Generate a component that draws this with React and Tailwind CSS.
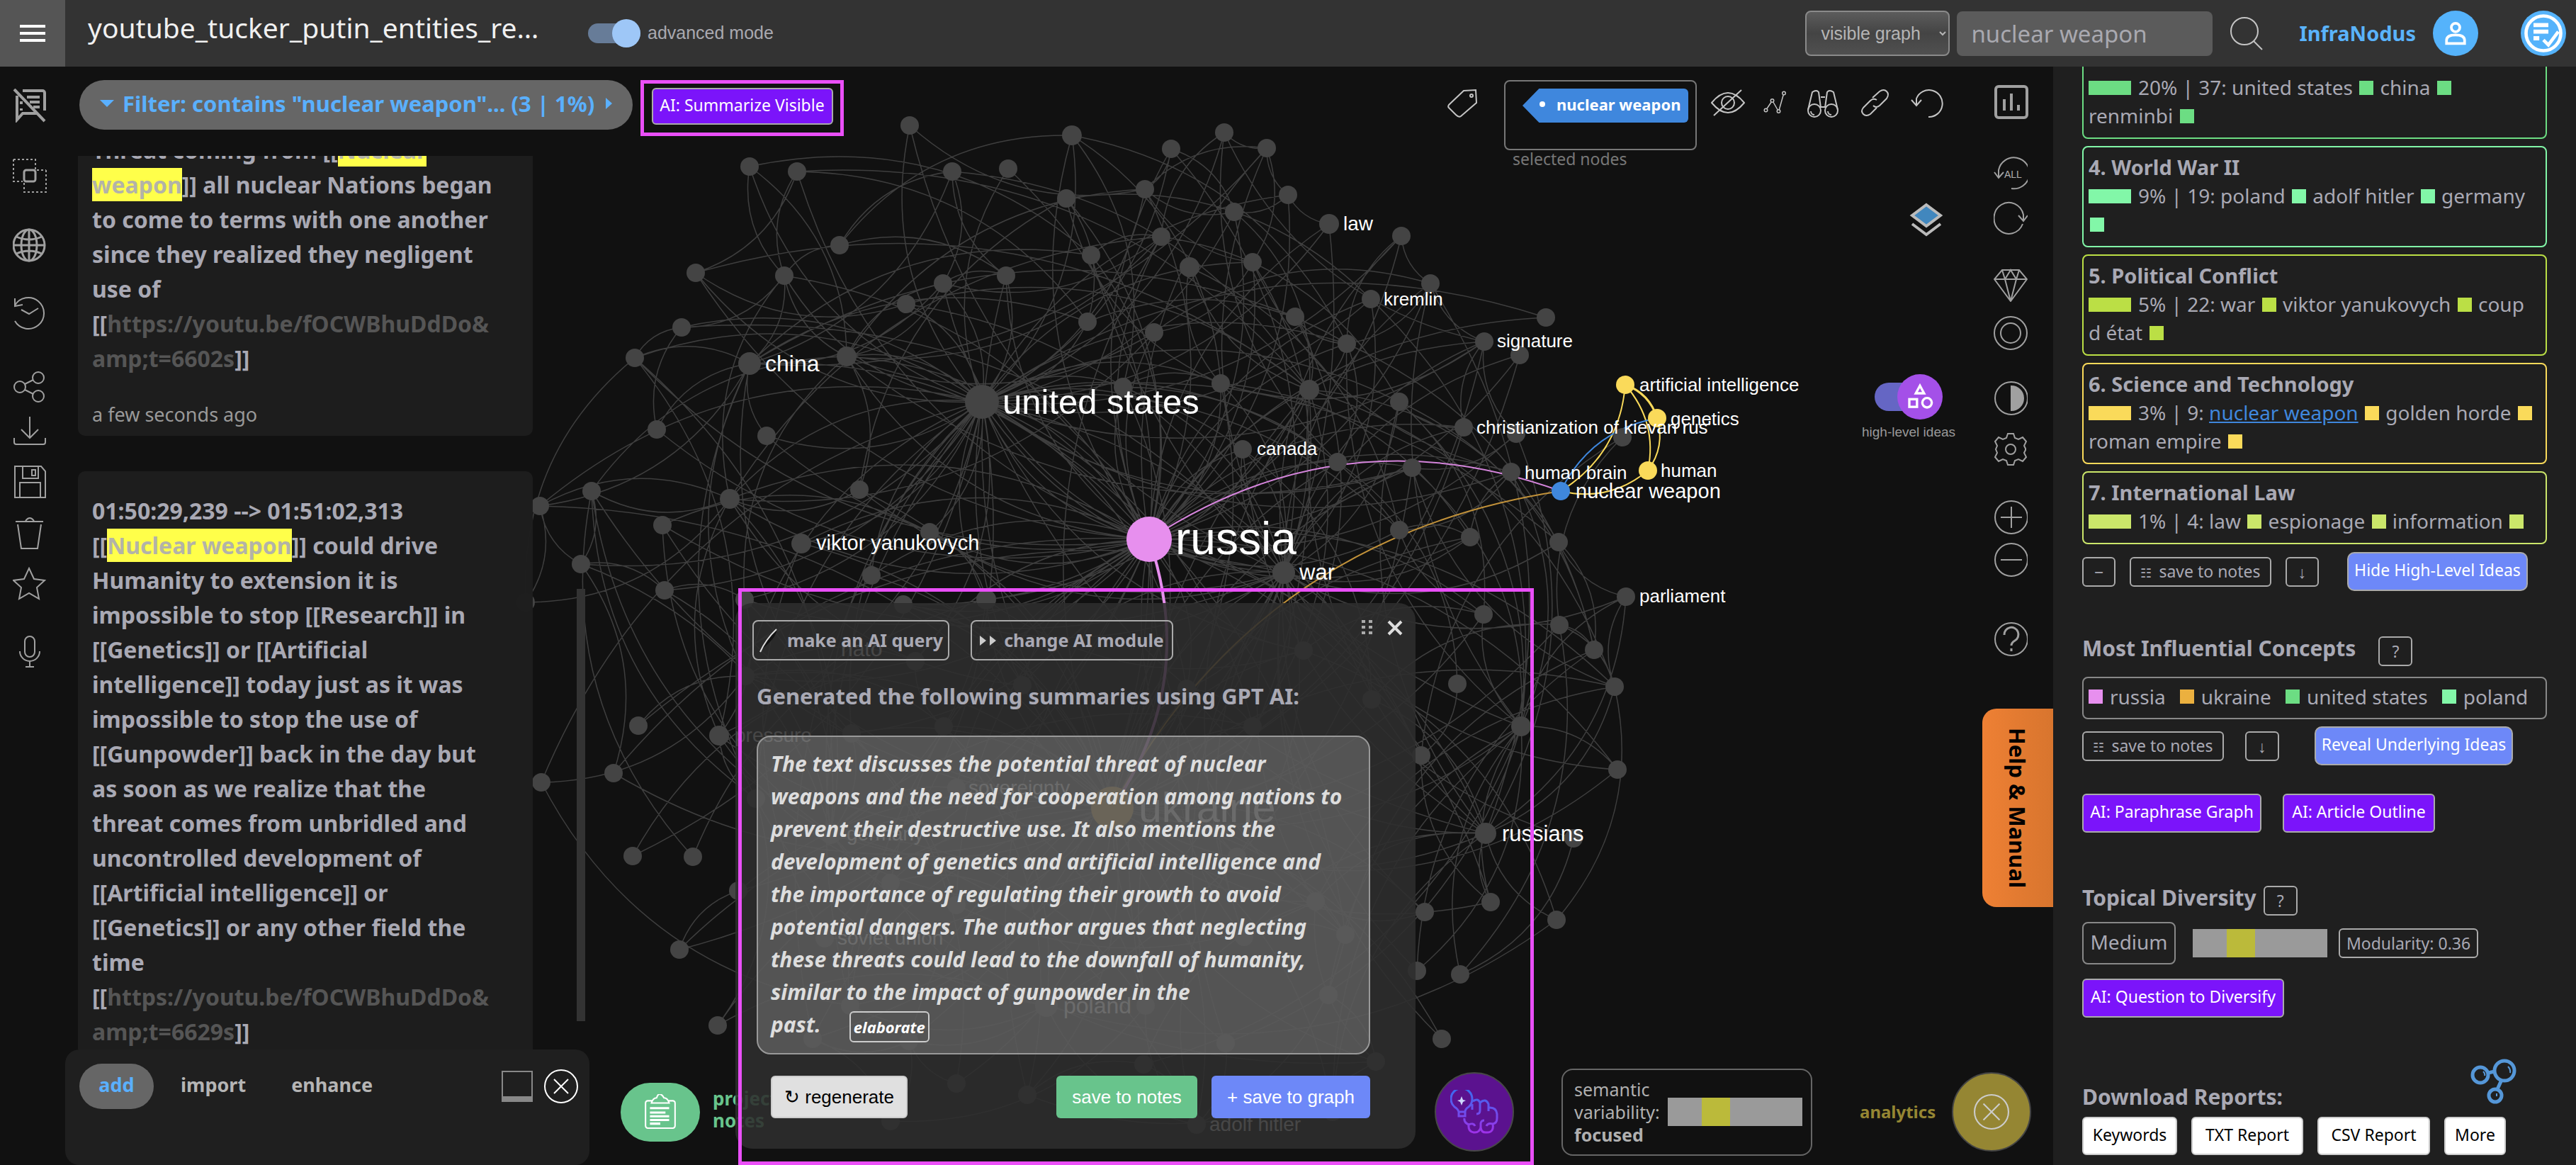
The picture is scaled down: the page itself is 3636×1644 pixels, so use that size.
import { useState } from 'react'

// [x, y, radius?]
const NODES = [
  [1386, 567, 24], [1622, 761, 32], [1570, 1140, 30], [1812, 808, 16], [1058, 513, 16], [2097, 1176, 15],
  [1477, 1419, 16], [1173, 1176, 15], [1195, 503, 14], [1848, 550, 14], [1015, 1038, 14], [1030, 704, 14], [2147, 1025, 14],
  [1284, 177], [1513, 191, 14], [1728, 187], [1653, 210], [1788, 209], [1058, 235], [1125, 242], [1344, 242],
  [1423, 238], [1616, 267], [1505, 280], [1742, 299], [1639, 334], [1540, 360], [1185, 346], [982, 385],
  [1107, 389], [1679, 377, 14], [1768, 370], [1420, 389], [1331, 400], [1279, 429], [1535, 454], [1629, 469],
  [962, 462], [896, 505], [1585, 546], [1723, 541], [927, 606], [1082, 615], [1754, 634], [835, 693],
  [762, 714], [1213, 691], [935, 741], [1312, 751], [1131, 767, 14], [820, 796], [1230, 812], [938, 833],
  [1051, 846], [1275, 853], [1392, 846, 14], [1818, 275], [1876, 316, 14], [1978, 333], [2019, 400],
  [1935, 422], [1828, 447], [1901, 485], [2182, 448], [2095, 482], [2145, 501], [1975, 567], [2066, 603],
  [2140, 612], [2290, 617], [1888, 652], [1993, 660], [2133, 666], [1975, 748], [2075, 758], [2200, 765],
  [2295, 842], [2094, 867], [2201, 882], [2250, 917], [2057, 965], [2279, 969], [2006, 1066], [2283, 1086],
  [2221, 1183], [1292, 933], [1443, 967], [1332, 1025], [1202, 1035], [1840, 918], [1675, 972], [1936, 987],
  [1768, 1025], [1350, 1112], [1746, 1209], [1257, 1246], [1350, 1277], [1439, 1272], [1857, 1272],
  [1899, 1319], [1756, 1322], [1164, 1324], [1875, 1404], [1617, 1419], [1200, 1419], [1147, 1466],
  [1730, 1472], [1283, 1469], [1614, 1502], [1942, 1498], [1350, 1529], [1450, 1545], [1257, 1582],
  [1689, 1587], [1881, 1569], [1052, 954], [1067, 1127], [2011, 1287], [2104, 1273], [2000, 1370],
  [2061, 1375], [2035, 1466], [2197, 1298], [764, 1104], [901, 1024], [866, 1091], [893, 1208],
  [978, 1209], [959, 1340], [1042, 1257], [1013, 1447], [742, 850],
]

const COLORED = [
  [2294, 543, '#fada5a'], [2339, 590, '#fada5a'], [2326, 664, '#fada5a'], [2203, 693, '#3f87dd'],
]

// text, x, y, size
const LABELS = [
  ['united states', 1415, 584, 49], ['russia', 1659, 782, 64], ['china', 1080, 524, 32],
  ['viktor yanukovych', 1152, 776, 29], ['canada', 1774, 642, 26], ['law', 1896, 325, 28],
  ['kremlin', 1953, 431, 26], ['signature', 2113, 490, 26], ['artificial intelligence', 2314, 552, 26],
  ['genetics', 2358, 600, 26], ["christianization of kievan rus'", 2084, 612, 26], ['human brain', 2152, 676, 26],
  ['human', 2344, 673, 26], ['nuclear weapon', 2224, 703, 29], ['war', 1834, 818, 31],
  ['parliament', 2314, 850, 26], ['russians', 2120, 1187, 31], ['ukraine', 1607, 1160, 59],
  ['nato', 1187, 926, 30], ['pressure', 1037, 1047, 28], ['sovereignty', 1367, 1121, 28],
  ['germany', 1195, 1186, 28], ['soviet union', 1182, 1333, 28], ['poland', 1501, 1430, 32],
  ['adolf hitler', 1707, 1596, 28],
]

// source x, y, target x, y, color, width
const LINKS = [
  [1622, 761, 2203, 693, '#d585dc', 2], [1570, 1140, 2203, 693, '#c2923a', 2], [2294, 543, 2203, 693, '#fada5a', 2],
  [2326, 664, 2203, 693, '#fada5a', 2], [2294, 543, 2339, 590, '#fada5a', 3], [2294, 543, 2326, 664, '#fada5a', 2],
  [2339, 590, 2326, 664, '#fada5a', 2], [2203, 693, 2339, 590, '#3f87dd', 2], [1622, 761, 1570, 1140, '#e78fee', 4],
]

function curve(x1, y1, x2, y2) {
  const cx = Math.round((x1 + x2) / 2 + (y2 - y1) / 4)
  const cy = Math.round((y1 + y2) / 2 + (x1 - x2) / 4)
  return `M${x1} ${y1}Q${cx} ${cy} ${x2} ${y2}`
}

function buildEdges() {
  let seed = 7
  const rnd = () => {
    seed = (seed * 16807) % 2147483647
    return seed / 2147483647
  }
  const out = []
  const join = (a, b) => {
    const [p, q] = rnd() > 0.5 ? [a, b] : [b, a]
    out.push(curve(p[0], p[1], q[0], q[1]))
  }
  const hubs = [0.7, 0.75, 0.65, 0.35, 0.15, 0.22, 0.2, 0.2, 0.18, 0.18, 0.12, 0.14, 0.18]
  NODES.forEach((n, i) => {
    hubs.forEach((chance, h) => {
      const d = Math.hypot(n[0] - NODES[h][0], n[1] - NODES[h][1])
      if (h !== i && d < 950 && rnd() < chance * (d > 650 ? 0.35 : 1)) join(n, NODES[h])
    })
    NODES.slice(i + 1).forEach(m => {
      const d = Math.hypot(n[0] - m[0], n[1] - m[1])
      if (d < 190 ? rnd() < 0.18 : d < 560 && rnd() < 0.03) join(n, m)
    })
  })
  return out.join('')
}

const EDGES = buildEdges()

function Graph() {
  return (
    <svg className="absolute left-0 -top-[94px] w-full h-[calc(100%+94px)]" aria-label="Knowledge graph">
      <path d={EDGES} fill="none" stroke="#474747" strokeWidth="1.5" strokeOpacity="0.85"/>
      {LINKS.map(([a, b, c, d, color, w], i) => (
        <path key={i} d={curve(a, b, c, d)} fill="none" stroke={color} strokeWidth={w}/>
      ))}
      {NODES.map(([x, y, r = 13], i) => (
        <circle key={i} cx={x} cy={y} r={r} fill={i === 1 ? '#e78fee' : i === 2 ? '#ebb03f' : '#444'}/>
      ))}
      {COLORED.map(([x, y, c]) => <circle key={x} cx={x} cy={y} r="13" fill={c}/>)}
      <g fill="#fff" className="font-['Liberation_Sans',sans-serif]">
        {LABELS.map(([t, x, y, s]) => <text key={t} x={x} y={y} fontSize={s}>{t}</text>)}
      </g>
    </svg>
  )
}

function Icon({ children, size = 48, color = '#a0a0a0', w = 2 }) {
  return (
    <svg width={size} height={size} viewBox="0 0 48 48" fill="none" stroke={color} strokeWidth={w} className="shrink-0" aria-hidden="true">
      {children}
    </svg>
  )
}

const RAIL = [
  { label: 'Hide text', gap: 'mt-[31px]', w: 4, d: <><path d="M14 3H42a3 3 0 0 1 3 3V31M6 10V44l8-9H34M20 12H38M24 19H38M29 26H38M12 18v4M12 28v3"/><path d="M2 1L45 46" strokeWidth="4"/></> },
  { label: 'Select', gap: 'mt-[51px]', d: <><path d="M1 1H32V15M1 1V32H14M47 16V47H16V33" strokeDasharray="3 3"/><path d="M34 16H47" strokeDasharray="3 3"/><rect x="16" y="16" width="16" height="16" rx="3" strokeWidth="3"/></> },
  { label: 'Web', gap: 'mt-[50px]', w: 3, d: <><circle cx="23" cy="24" r="22"/><ellipse cx="23" cy="24" rx="11" ry="22"/><path d="M23 2V46M1 24H45M5 12Q23 20 41 12M5 36Q23 28 41 36"/></> },
  { label: 'History', gap: 'mt-12', d: <><path d="M3 13A22 22 0 1 1 3 35M3 3V14L14 12" /><path d="M12 19L23 25L36 17"/></> },
  { label: 'Share', gap: 'mt-14', d: <><circle cx="10" cy="24" r="8"/><circle cx="36" cy="11" r="8"/><circle cx="36" cy="37" r="8"/><path d="M17 20L29 14M17 28L29 34"/></> },
  { label: 'Download', gap: 'mt-3.5', d: <path d="M24 4V34M12 22L24 34L36 22M2 34V40a3 3 0 0 0 3 3H43a3 3 0 0 0 3-3V34"/> },
  { label: 'Save', gap: 'mt-6', d: <><path d="M3 2H40L46 9V46H3ZM10 46V25H39V46M14 2V19H36V2M27 7H32V15H27Z"/></> },
  { label: 'Delete', gap: 'mt-6', d: <path d="M4 8H43M18 7Q24-1 30 7M7 12L12 46H35L40 12"/> },
  { label: 'Favourite', gap: 'mt-6', d: <path d="M23 2L30 17L45 19L34 29L37 45L23 37L9 45L12 29L1 19L16 17Z"/> },
  { label: 'Dictate', gap: 'mt-12', d: <><rect x="17" y="2" width="14" height="29" rx="7"/><path d="M10 23a14 14 0 0 0 28 0M24 37V45M18 45H30"/></> },
]

const TOOLS = [
  { label: 'Undo all', gap: '', d: <><path d="M25 46A22 22 0 1 0 7 20V30M1 23L7 31L14 23"/><text x="15" y="31" fontSize="14" fill="#b0b0b0" stroke="none" fontFamily="Liberation Sans">ALL</text></> },
  { label: 'Redo', gap: 'mt-4', d: <path d="M43 32A21 22 0 1 1 44 19V27M37 20L44 28L50 20" transform="translate(-2 0)"/> },
  { label: 'Insight', gap: 'mt-[46px]', d: <path d="M12 3H36L47 16L24 47L1 16ZM1 16H47M12 3L16 16L24 3L32 16L36 3M16 16L24 47L32 16"/> },
  { label: 'Focus', gap: 'mt-5', d: <><circle cx="24" cy="24" r="23"/><circle cx="24" cy="24" r="14"/></> },
  { label: 'Contrast', gap: 'mt-11', d: <><circle cx="25" cy="24" r="23"/><path d="M25 7a17 17 0 0 1 0 34Z" fill="#a0a0a0"/></> },
  { label: 'Settings', gap: 'mt-6', d: <><path d="M20 2h8l2 6 5 2 6-3 5 6-3 6 2 4v2l-2 4 3 6-5 6-6-3-5 2-2 6h-8l-2-6-5-2-6 3-5-6 3-6-2-5 2-5-3-6 5-6 6 3 5-2Z"/><circle cx="24" cy="24" r="7"/></> },
  { label: 'Zoom in', gap: 'mt-12', d: <><circle cx="25" cy="24" r="23"/><path d="M25 9V39M10 24H40"/></> },
  { label: 'Zoom out', gap: 'mt-3', d: <><circle cx="25" cy="24" r="23"/><path d="M10 24H40"/></> },
  { label: 'Help', gap: 'mt-16', d: <><circle cx="25" cy="24" r="23"/><path d="M15 18a10 10 0 1 1 15 8q-5 3-5 7M25 37V41" strokeWidth="3"/></> },
]

function Header() {
  const [advanced, setAdvanced] = useState(true)
  return (
    <header className="relative z-10 flex h-[94px] shrink-0 items-center bg-[#333]">
      <button aria-label="Menu" className="flex h-full w-[92px] items-center justify-center bg-[#555]">
        <span className="flex w-9 flex-col gap-1.5">
          <span className="h-1 bg-white"/><span className="h-1 bg-white"/><span className="h-1 bg-white"/>
        </span>
      </button>
      <h1 className="ml-8 w-[706px] whitespace-nowrap pb-4 text-[39px] leading-[50px] text-[#f0f0f0]">youtube_tucker_putin_entities_re…</h1>
      <label className="flex items-center gap-2.5 font-['Liberation_Sans',sans-serif] text-[25px] text-[#a9a9b0]">
        <input type="checkbox" checked={advanced} onChange={e => setAdvanced(e.target.checked)} className="sr-only"/>
        <span className="flex h-7 w-[74px] items-center justify-end rounded-full bg-[#677c98]"><span className="size-10 shrink-0 rounded-full bg-[#9ec7f7]"/></span>
        advanced mode
      </label>
      <div className="ml-auto flex items-center">
        <select aria-label="Search scope" className="h-16 w-[204px] rounded-lg border-2 border-[#8a8a8a] bg-gradient-to-b from-[#5c5c5c] via-[#444] to-[#505050] pl-4 font-['Liberation_Sans',sans-serif] text-[25px] text-[#b5b5b5]">
          <option>visible graph</option>
        </select>
        <input aria-label="Search" defaultValue="nuclear weapon" className="ml-2.5 h-[63px] w-[361px] rounded-lg bg-[#5b5b5b] px-5 text-[33px] text-[#a9a9b0]"/>
        <button aria-label="Search" className="ml-6"><Icon color="#c4c4c4"><circle cx="21" cy="21" r="19"/><path d="M34 35L46 47"/></Icon></button>
        <a href="#account" className="ml-[50px] text-[29px] font-bold text-[#5ab3fb]">InfraNodus</a>
        <button aria-label="Profile" className="ml-6 flex size-16 items-center justify-center rounded-full bg-[#55b3fb]">
          <Icon size={36} color="#fff" w={5}><circle cx="24" cy="13" r="8"/><path d="M7 43V37Q7 27 24 27T41 37V43Z"/></Icon>
        </button>
        <button aria-label="Guide" className="ml-[60px] mr-3.5 flex size-16 items-center justify-center rounded-full bg-[#55b3fb]">
          <Icon size={56} color="#fff" w={4}><circle cx="24" cy="24" r="21"/><path d="M12 14H30M12 22H30M12 30H19" strokeWidth="5"/><path d="M24 32L30 38L42 22"/></Icon>
        </button>
      </div>
    </header>
  )
}

function TopBar() {
  return (
    <div className="flex h-[126px] shrink-0 items-start pr-[35px] pt-[19px]">
      <button className="ml-5 flex h-[70px] w-[781px] items-center rounded-full bg-[#666] pb-1 pl-[29px] text-[31px] font-bold text-[#5ab0ff]">
        <svg width="20" height="10" className="mr-3" aria-hidden="true"><path d="M0 0H20L10 10Z" fill="#5ab0ff"/></svg>
        <span className="whitespace-nowrap">Filter: contains "nuclear weapon"... (3 | 1%)</span>
        <svg width="9" height="16" className="ml-4" aria-hidden="true"><path d="M0 0L9 8L0 16Z" fill="#5ab0ff"/></svg>
      </button>
      <div className="ml-[11px] flex h-[79px] w-[287px] justify-center border-5 border-[#ea4ff8] pt-1.5">
        <button className="h-[52px] w-64 rounded-md border-2 border-[#aaa] bg-[#7b14fa] pb-1 text-[23px] text-white">AI: Summarize Visible</button>
      </div>
      <div className="ml-auto flex items-start">
        <button aria-label="Tag" className="mt-2"><Icon color="#c4c4c4"><path d="M27 7L44 6L45 24L23 43Q20 45 16 41L7 32Q4 30 6 27Z"/><circle cx="38" cy="14" r="2"/></Icon></button>
        <div className="ml-9">
          <div className="flex h-[99px] w-[272px] justify-end rounded-lg border-2 border-[#777] pr-2.5 pt-2.5">
            <span className="flex h-12 w-[234px] items-center gap-4 rounded-md bg-[#3f87dd] pb-1 pl-6 text-[22px] font-bold text-white [clip-path:polygon(10%_0,100%_0,100%_100%,10%_100%,0_50%)]">
              <span className="size-2 shrink-0 rounded-full bg-white"/>
              <span className="whitespace-nowrap">nuclear weapon</span>
            </span>
          </div>
          <p className="ml-3 text-[23px] leading-6 text-[#777]">selected nodes</p>
        </div>
        <div className="ml-5 mt-2 flex items-center gap-[25px]">
          <Icon color="#c4c4c4"><path d="M1 24Q24-4 47 24Q24 52 1 24Z"/><circle cx="24" cy="24" r="9"/><path d="M4 42L43 6"/></Icon>
          <Icon size={36} color="#c4c4c4"><circle cx="6" cy="38" r="3"/><circle cx="18" cy="20" r="3"/><circle cx="30" cy="40" r="3"/><circle cx="40" cy="6" r="3"/><path d="M8 35L16 23M20 23L28 37M31 37L39 9"/></Icon>
          <Icon color="#c4c4c4"><circle cx="12" cy="35" r="9"/><circle cx="36" cy="35" r="9"/><path d="M3 34L9 9q6-4 9 0l3 22M45 34L39 9q-6-4-9 0l-3 22M21 16h6M21 30h6M7 36a5 5 0 0 0 5 5M31 36a5 5 0 0 0 5 5"/></Icon>
          <Icon color="#c4c4c4"><path d="M21 17L31 8q6-4 10 0t0 10L31 28q-5 4-9 0M27 20q-5-3-9 1L8 31q-4 5 0 9t10 0l9-9"/></Icon>
          <Icon color="#c4c4c4"><path d="M27 44A19 19 0 1 0 10 18V27M3 20L10 28L17 20"/></Icon>
        </div>
        <button aria-label="Analytics" className="ml-[72px] mt-[7px]"><Icon w={4}><rect x="2" y="2" width="44" height="44" rx="4"/><path d="M14 20V36M24 12V36M34 28V36"/></Icon></button>
      </div>
    </div>
  )
}

const Mark = ({ children }) => <mark className="bg-[#ffff4a] py-0.5 text-[#b3b3a8]">{children}</mark>
const Url = ({ children }) => <span className="text-[#555]">{children}</span>

function Notes() {
  return (
    <section className="relative flex w-[740px] shrink-0 flex-col">
      <div className="flex min-h-0 flex-1">
        <div className="ml-[18px] w-[642px] overflow-hidden whitespace-nowrap text-[32px] font-bold leading-[49px] text-[#a9a9b4]">
          <article className="-mt-[33px] h-[428px] rounded-[10px] bg-[#1e1e1e]/98 px-5">
            <p>
              Threat coming from [[<Mark>Nuclear</Mark><br/>
              <Mark>weapon</Mark>]] all nuclear Nations began<br/>
              to come to terms with one another<br/>
              since they realized they negligent<br/>
              use of<br/>
              [[<Url>https://youtu.be/fOCWBhuDdDo&amp;</Url><br/>
              <Url>amp;t=6602s</Url>]]
            </p>
            <p className="mt-[30px] text-[27px] font-normal text-[#999]">a few seconds ago</p>
          </article>
          <article className="mt-[50px] rounded-[10px] bg-[#1e1e1e]/98 px-5 pb-40 pt-[31px]">
            01:50:29,239 --&gt; 01:51:02,313<br/>
            [[<Mark>Nuclear weapon</Mark>]] could drive<br/>
            Humanity to extension it is<br/>
            impossible to stop [[Research]] in<br/>
            [[Genetics]] or [[Artificial<br/>
            intelligence]] today just as it was<br/>
            impossible to stop the use of<br/>
            [[Gunpowder]] back in the day but<br/>
            as soon as we realize that the<br/>
            threat comes from unbridled and<br/>
            uncontrolled development of<br/>
            [[Artificial intelligence]] or<br/>
            [[Genetics]] or any other field the<br/>
            time<br/>
            [[<Url>https://youtu.be/fOCWBhuDdDo&amp;</Url><br/>
            <Url>amp;t=6629s</Url>]]
          </article>
        </div>
        <div className="mb-10 ml-auto mr-1.5 h-[610px] w-3 self-end bg-[#333]"/>
      </div>
      <div className="flex h-[163px] shrink-0 items-start rounded-[20px] bg-[#1f1f1f] px-4 pt-5 text-[27px] font-bold text-[#b5b5b5]">
        <button className="ml-1 h-16 w-[105px] rounded-full bg-[#666] pb-1 text-[#5ab0ff]">add</button>
        <button className="ml-[38px] h-16 pb-1">import</button>
        <button className="ml-16 h-16 pb-1">enhance</button>
        <button aria-label="Dock" className="ml-auto mt-2.5 h-11 w-11 border-2 border-b-8 border-[#888]"/>
        <button aria-label="Close" className="ml-4 mt-2"><Icon color="#fff"><circle cx="24" cy="24" r="23"/><path d="M14 14L34 34M34 14L14 34"/></Icon></button>
      </div>
    </section>
  )
}

function AiModal() {
  return (
    <div role="dialog" aria-label="AI summary" className="absolute bottom-[23px] left-[206px] w-[960px] rounded-3xl bg-[#2e2e2e]/88 pb-[43px] pl-6 pt-6">
      <div className="flex items-start">
        <button className="flex h-[57px] w-[278px] items-center justify-center gap-3 rounded-lg border-2 border-[#aaa] text-[25px] font-bold text-[#a9a9b4]">
          <svg width="28" height="36" viewBox="0 0 28 36" aria-hidden="true"><path d="M2 34Q8 14 25 2Q26 12 8 27Z" fill="#111"/><path d="M2 34Q10 16 25 2" fill="none" stroke="#ddd" strokeWidth="2"/></svg>
          <span className="whitespace-nowrap">make an AI query</span>
        </button>
        <button className="ml-[30px] flex h-[57px] w-[286px] items-center justify-center gap-2.5 rounded-lg border-2 border-[#aaa] text-[25px] font-bold text-[#a9a9b4]">
          <svg width="24" height="14" aria-hidden="true"><path d="M0 0L9 7L0 14ZM14 0L23 7L14 14Z" fill="#ccc"/></svg>
          <span className="whitespace-nowrap">change AI module</span>
        </button>
        <span className="ml-auto mr-[18px] flex items-center gap-5">
          <svg width="16" height="22" fill="#aaa" aria-hidden="true"><path d="M0 0h5v4h-5zM10 0h5v4h-5zM0 8h5v4h-5zM10 8h5v4h-5zM0 16h5v4h-5zM10 16h5v4h-5z"/></svg>
          <button aria-label="Close"><svg width="22" height="22"><path d="M2 2L20 20M20 2L2 20" stroke="#ddd" strokeWidth="4"/></svg></button>
        </span>
      </div>
      <div className="ml-1.5 w-[866px]">
        <h2 className="mt-[26px] whitespace-nowrap text-[31px] font-bold leading-[48px] text-[#a9a9b4]">Generated the following summaries using GPT AI:</h2>
        <p className="mt-8 whitespace-nowrap rounded-[20px] border-2 border-[#999] bg-white/20 px-[18px] py-[15px] text-[30px] font-bold italic leading-[46px] text-[#ddd]">
          The text discusses the potential threat of nuclear<br/>
          weapons and the need for cooperation among nations to<br/>
          prevent their destructive use. It also mentions the<br/>
          development of genetics and artificial intelligence and<br/>
          the importance of regulating their growth to avoid<br/>
          potential dangers. The author argues that neglecting<br/>
          these threats could lead to the downfall of humanity,<br/>
          similar to the impact of gunpowder in the<br/>
          past.<button className="ml-10 h-11 w-[113px] rounded-md border-2 border-[#ccc] align-middle text-[22px] font-bold italic leading-8 text-white">elaborate</button>
        </p>
        <div className="mt-[30px] flex font-['Liberation_Sans',sans-serif] text-[26px]">
          <button className="ml-5 h-[60px] w-[193px] rounded-md border-2 border-[#ccc] bg-[#e0e0e0] text-black">↻ regenerate</button>
          <button className="ml-auto h-[60px] w-[199px] rounded-md bg-[#68c48c] text-white">save to notes</button>
          <button className="ml-5 h-[60px] w-[224px] rounded-md bg-[#6d88f8] text-white">+ save to graph</button>
        </div>
      </div>
    </div>
  )
}

function Level({ className }) {
  return <span className={`flex h-10 w-[190px] shrink-0 bg-[#9a9a9a] ${className}`}><span className="ml-12 w-10 bg-[#bbba3a]"/></span>
}

function BottomBar() {
  return (
    <div className="flex h-[150px] shrink-0 items-center pr-[31px]">
      <button aria-label="Project notes" className="ml-11 flex h-[83px] w-28 items-center justify-center rounded-full bg-[#68c48c]">
        <Icon size={50} color="#fff" w={2}><path d="M14 9H7a3 3 0 0 0-3 3V43a3 3 0 0 0 3 3H41a3 3 0 0 0 3-3V12a3 3 0 0 0-3-3H34M12 12Q14 5 19 5Q21-1 24 0T29 5Q34 5 36 12Z"/><path d="M10 19H36M10 25H31M10 30H36M10 35H36M10 40H24" strokeWidth="3"/></Icon>
      </button>
      <p className="ml-[18px] w-[120px] pb-1.5 text-[26px] font-bold leading-[31px] text-[#68c48c]">project notes</p>
      <button aria-label="AI" className="ml-auto flex size-28 items-center justify-center rounded-full border-2 border-[#484848] bg-[#5b128f]">
        <svg width="68" height="62" viewBox="0 0 68 62" fill="none" stroke="url(#brain)" strokeWidth="3" aria-hidden="true">
          <defs>
            <linearGradient id="brain" gradientUnits="userSpaceOnUse" x1="0" y1="0" x2="0" y2="62">
              <stop offset="0" stopColor="#3a6cf0"/>
              <stop offset="1" stopColor="#a030e8"/>
            </linearGradient>
          </defs>
          <path d="M12 31Q11 27 6 24A15 15 0 1 1 26 24Q21 27 21 31ZM12 31V37H21V31M32 16Q39 11 42 18Q50 11 54 20V25Q65 24 66 34V40Q66 47 60 48Q62 60 52 60Q44 61 43 53Q41 61 33 60Q25 59 26 49Q19 46 20 40M31 20V28M42 18V29Q42 34 37 34M54 25V30M60 48Q53 46 51 51M43 53V47Q44 43 48 43M26 49Q33 46 35 51"/>
          <path d="M16 9L18 14L22 15L18 17L16 22L14 17L10 15L14 14Z" fill="#cfd8ff" stroke="none"/>
        </svg>
      </button>
      <div className="ml-[67px] flex h-[123px] w-[354px] items-center justify-between rounded-2xl border-2 border-[#666] pl-4 pr-3 text-[25px] leading-8 text-[#b0b0b0]">
        <p>semantic<br/>variability:<br/><b>focused</b></p>
        <Level className=""/>
      </div>
      <span className="ml-[67px] w-[108px] text-[24px] font-bold text-[#958633]">analytics</span>
      <button aria-label="Close analytics" className="ml-[22px] flex size-28 items-center justify-center rounded-full border-2 border-[#444] bg-[#958633]">
        <Icon size={50} color="#ccc"><circle cx="24" cy="24" r="23"/><path d="M13 13L35 35M35 13L13 35"/></Icon>
      </button>
    </div>
  )
}

const TOPICS = [
  { title: '3. Economic Relations', stat: '20% | 37:', color: 'bg-[#6cdd83]', border: 'border-[#6cdd83]', words: ['united states', 'china', 'renminbi'] },
  { title: '4. World War II', stat: '9% | 19:', color: 'bg-[#82f7a8]', border: 'border-[#82f7a8]', words: ['poland', 'adolf hitler', 'germany'] },
  { title: '5. Political Conflict', stat: '5% | 22:', color: 'bg-[#bbdf45]', border: 'border-[#bbdf45]', words: ['war', 'viktor yanukovych', 'coup d état'] },
  { title: '6. Science and Technology', stat: '3% | 9:', color: 'bg-[#fada5a]', border: 'border-[#fada5a]', words: ['nuclear weapon', 'golden horde', 'roman empire'] },
  { title: '7. International Law', stat: '1% | 4:', color: 'bg-[#cbe66a]', border: 'border-[#cbe66a]', words: ['law', 'espionage', 'information'] },
]

const CONCEPTS = [
  ['russia', 'bg-[#e78fee]'], ['ukraine', 'bg-[#ebb03f]'], ['united states', 'bg-[#6cdd83]'], ['poland', 'bg-[#82f7a8]'],
]

const SMALL = 'h-[42px] shrink-0 whitespace-nowrap rounded-md border-2 border-[#aaa] text-[23px] leading-8 text-[#a9a9b4]'
const BLUE = 'h-[55px] shrink-0 whitespace-nowrap rounded-[10px] border-2 border-[#aaa] bg-[#6d88f8] pb-1 text-[23px] text-white'
const PURPLE = 'h-[55px] whitespace-nowrap rounded-md border-2 border-[#aaa] bg-[#7b14fa] pb-1 text-[23px] text-white'
const WHITE = 'h-[54px] whitespace-nowrap rounded-md border-2 border-[#ccc] bg-white pb-1 text-[23px] text-black'

function SaveNotes() {
  return <button className={`${SMALL} w-[200px]`}><span className="mr-1 text-[18px]">☷</span> save to notes</button>
}

function Insights() {
  return (
    <aside className="relative w-[738px] shrink-0 overflow-hidden bg-[#1f1f1f] px-[41px] text-[28px] text-[#a9a9b4]">
      <div className="-mt-[41px] flex flex-col gap-2.5">
        {TOPICS.map(t => (
          <div key={t.title} className={`rounded-lg border-2 pb-[11px] pl-[7px] pr-2.5 pt-2 leading-10 ${t.border}`}>
            <h3 className="text-[29px] font-bold">{t.title}</h3>
            <p>
              <span className={`mr-2.5 inline-block h-5 w-[60px] ${t.color}`}/>
              {t.stat}{' '}
              {t.words.map(w => (
                <span key={w}>
                  {w === 'nuclear weapon' ? <a href="#nuclear" className="text-[#3f87dd] underline">{w}</a> : w}
                  {' '}<span className={`mx-0.5 inline-block size-5 ${t.color}`}/>{' '}
                </span>
              ))}
            </p>
          </div>
        ))}
      </div>
      <div className="mt-[11px] flex items-center">
        <button className={`${SMALL} w-[47px]`}>−</button>
        <span className="ml-5 flex"><SaveNotes/></span>
        <button className={`${SMALL} ml-5 w-[47px]`}>↓</button>
        <button className={`${BLUE} ml-10 w-[255px]`}>Hide High-Level Ideas</button>
      </div>
      <div className="mt-16 flex h-[42px] items-center">
        <h2 className="whitespace-nowrap pb-2 text-[30px] font-bold leading-10">Most Influential Concepts</h2>
        <button className={`${SMALL} ml-8 w-12`}>?</button>
      </div>
      <div className="mt-[15px] flex h-[60px] items-center gap-5 whitespace-nowrap rounded-lg border-2 border-[#888] pb-1 pl-[7px]">
        {CONCEPTS.map(([name, color]) => (
          <span key={name} className="flex items-center gap-2.5"><span className={`size-5 ${color}`}/>{name}</span>
        ))}
      </div>
      <div className="mt-2.5 flex items-center">
        <SaveNotes/>
        <button className={`${SMALL} ml-[30px] w-12`}>↓</button>
        <button className={`${BLUE} ml-[50px] w-[280px]`}>Reveal Underlying Ideas</button>
      </div>
      <div className="mt-10 flex gap-[30px]">
        <button className={`${PURPLE} w-[253px]`}>AI: Paraphrase Graph</button>
        <button className={`${PURPLE} w-[215px]`}>AI: Article Outline</button>
      </div>
      <div className="mt-[75px] flex h-[42px] items-center">
        <h2 className="whitespace-nowrap pb-2 text-[30px] font-bold leading-10">Topical Diversity</h2>
        <button className={`${SMALL} ml-2.5 w-12`}>?</button>
      </div>
      <div className="mt-[9px] flex items-center">
        <span className="flex h-[60px] w-[132px] items-center justify-center rounded-lg border-2 border-[#888] pb-1">Medium</span>
        <Level className="ml-6"/>
        <span className={`${SMALL} ml-4 flex w-[197px] items-center justify-center`}>Modularity: 0.36</span>
      </div>
      <button className={`${PURPLE} mt-5 w-[285px]`}>AI: Question to Diversify</button>
      <div className="mt-[60px] flex h-16 items-end">
        <h2 className="text-[30px] font-bold leading-6">Download Reports:</h2>
        <svg width="66" height="66" viewBox="0 0 66 66" fill="none" stroke="#5597d8" strokeWidth="5" className="ml-auto mr-[42px]" aria-hidden="true">
          <circle cx="14" cy="23" r="11"/><circle cx="48" cy="17" r="14"/><circle cx="35" cy="52" r="9"/>
          <path d="M25 20L34 18M44 30L38 43"/><path d="M18 18q3 3 2 6M53 11q4 4 3 9M37 49v4" strokeWidth="2"/>
        </svg>
      </div>
      <div className="mt-4 flex gap-5">
        <button className={`${WHITE} w-[134px]`}>Keywords</button>
        <button className={`${WHITE} w-[158px]`}>TXT Report</button>
        <button className={`${WHITE} w-[159px]`}>CSV Report</button>
        <button className={`${WHITE} w-[87px]`}>More</button>
      </div>
    </aside>
  )
}

export default function App() {
  return (
    <div className="flex h-screen flex-col overflow-hidden bg-[#111] font-['Noto_Sans',sans-serif]">
      <Header/>
      <div className="relative flex min-h-0 flex-1">
        <Graph/>
        <nav className="relative flex w-[92px] shrink-0 flex-col pl-[18px]">
          {RAIL.map(r => <button key={r.label} aria-label={r.label} className={`size-12 ${r.gap}`}><Icon w={r.w}>{r.d}</Icon></button>)}
        </nav>
        <main className="relative flex min-w-0 flex-1 flex-col">
          <TopBar/>
          <div className="flex min-h-0 flex-1">
            <Notes/>
            <div className="relative flex min-w-0 flex-1 flex-col">
              <div className="flex flex-1 justify-end">
                <div className="mr-[39px] mt-[66px] flex w-[130px] flex-col items-center">
                  <button aria-label="Layers" className="mr-4 self-end"><Icon w={4} color="#bbb"><path d="M24 3L44 18L24 33L4 18Z" fill="#4187be"/><path d="M4 30L24 45L44 30"/></Icon></button>
                  <label className="mt-[194px] flex flex-col items-center whitespace-nowrap font-['Liberation_Sans',sans-serif] text-[19px] text-[#999]">
                    <input type="checkbox" defaultChecked className="sr-only"/>
                    <span className="mb-1 flex h-16 w-24 items-center justify-between">
                      <span className="h-10 w-10 rounded-l-full bg-[#6566c4]"/>
                      <span className="-ml-5 flex size-16 items-center justify-center rounded-full bg-[#a450e8]">
                        <Icon size={40} color="#fff" w={4}><path d="M24 5L31 18H17Z"/><rect x="6" y="28" width="13" height="13"/><circle cx="36" cy="34" r="8"/></Icon>
                      </span>
                    </span>
                    high-level ideas
                  </label>
                </div>
                <div className="flex w-[100px] flex-col items-start">
                  {TOOLS.map(t => <button key={t.label} aria-label={t.label} className={`ml-4 size-12 ${t.gap}`}><Icon>{t.d}</Icon></button>)}
                  <a href="#manual" className="mt-[74px] flex h-[280px] w-full items-center justify-center rounded-l-[20px] bg-gradient-to-r from-[#ee8034] to-[#d8752e] text-[31px] font-bold text-black [writing-mode:vertical-rl]">Help &amp; Manual</a>
                </div>
              </div>
              <BottomBar/>
              <AiModal/>
              <div className="pointer-events-none absolute bottom-0 left-[210px] h-[814px] w-[1123px] border-5 border-[#ea4ff8]"/>
            </div>
          </div>
        </main>
        <Insights/>
      </div>
    </div>
  )
}
